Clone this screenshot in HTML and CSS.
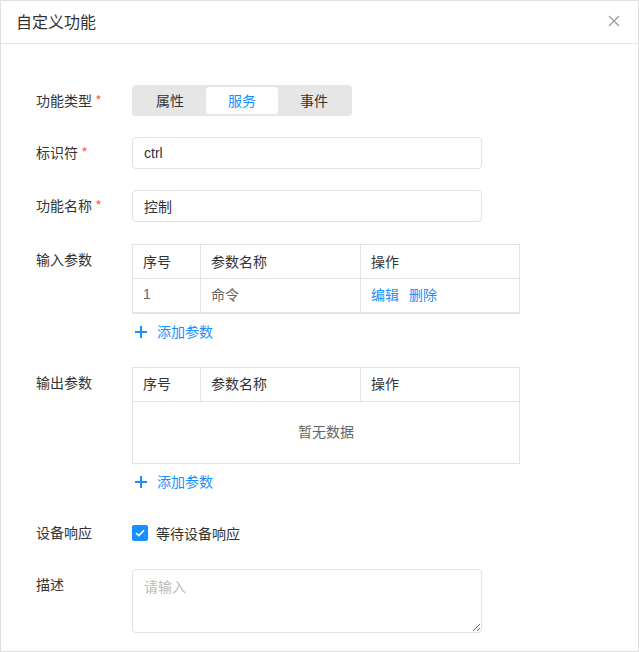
FILE: index.html
```html
<!DOCTYPE html>
<html lang="zh-CN">
<head>
    <meta charset="UTF-8">
    <title>自定义功能</title>
    <link rel="stylesheet" href="styles.css">
</head>
<body>
    <div class="dialog">
        <div class="dialog-header">
            <span class="dialog-title">自定义功能</span>
            <span class="dialog-close">
                <svg width="12" height="12" viewBox="0 0 12 12"><path d="M1 1L11 11M11 1L1 11" stroke="#999" stroke-width="1.2" fill="none"/></svg>
            </span>
        </div>
        <div class="dialog-body">
            <div class="form-item">
                <label class="form-label">功能类型 <i>*</i></label>
                <div class="segment">
                    <span class="segment-tab">属性</span>
                    <span class="segment-tab active">服务</span>
                    <span class="segment-tab">事件</span>
                </div>
            </div>

            <div class="form-item">
                <label class="form-label">标识符 <i>*</i></label>
                <input class="input latin" type="text" value="ctrl">
            </div>

            <div class="form-item form-item-wide">
                <label class="form-label">功能名称 <i>*</i></label>
                <input class="input" type="text" value="控制">
            </div>

            <div class="form-item param-item">
                <label class="form-label">输入参数</label>
                <div class="param-box">
                    <table class="param-table">
                        <colgroup><col class="col-no"><col class="col-name"><col></colgroup>
                        <thead>
                            <tr><th>序号</th><th>参数名称</th><th>操作</th></tr>
                        </thead>
                        <tbody>
                            <tr class="last-row">
                                <td class="muted latin">1</td>
                                <td class="muted">命令</td>
                                <td><a class="link">编辑</a><a class="link">删除</a></td>
                            </tr>
                        </tbody>
                    </table>
                    <div class="add-btn">
                        <svg width="12" height="12" viewBox="0 0 12 12"><path d="M6 0V12M0 6H12" stroke="#1890ff" stroke-width="2"/></svg>
                        <span>添加参数</span>
                    </div>
                </div>
            </div>

            <div class="form-item param-item">
                <label class="form-label">输出参数</label>
                <div class="param-box">
                    <table class="param-table">
                        <colgroup><col class="col-no"><col class="col-name"><col></colgroup>
                        <thead>
                            <tr><th>序号</th><th>参数名称</th><th>操作</th></tr>
                        </thead>
                        <tbody>
                            <tr><td class="empty" colspan="3">暂无数据</td></tr>
                        </tbody>
                    </table>
                    <div class="add-btn">
                        <svg width="12" height="12" viewBox="0 0 12 12"><path d="M6 0V12M0 6H12" stroke="#1890ff" stroke-width="2"/></svg>
                        <span>添加参数</span>
                    </div>
                </div>
            </div>

            <div class="form-item form-item-tight">
                <label class="form-label">设备响应</label>
                <label class="checkbox">
                    <span class="checkbox-box">
                        <svg width="10" height="8" viewBox="0 0 10 8"><path d="M1 4L3.8 6.6L9 1.2" stroke="#fff" stroke-width="1.6" fill="none"/></svg>
                    </span>
                    <span>等待设备响应</span>
                </label>
            </div>

            <div class="form-item">
                <label class="form-label">描述</label>
                <textarea class="textarea" placeholder="请输入"></textarea>
            </div>
        </div>
    </div>
</body>
</html>
```

FILE: styles.css
```css
* {
    box-sizing: border-box;
}

body {
    margin: 0;
    font-family: "Noto Sans CJK SC", "Liberation Sans", sans-serif;
    font-size: 14px;
    color: #333;
    background: #fff;
}

.latin {
    font-family: "Liberation Sans", "Noto Sans CJK SC", sans-serif;
}

.dialog {
    width: 639px;
    height: 652px;
    border: 1px solid #e0e0e0;
    background: #fff;
}

.dialog-header {
    height: 43px;
    border-bottom: 1px solid #e4e4e4;
    display: flex;
    align-items: center;
    justify-content: space-between;
    padding: 0 18px 2px 15px;
}

.dialog-title {
    font-size: 16px;
    color: #333;
}

.dialog-close {
    display: flex;
    cursor: pointer;
}

.dialog-body {
    padding: 41px 0 0 35px;
}

.form-item {
    display: flex;
    align-items: flex-start;
    margin-bottom: 21px;
}

.form-item-wide {
    margin-bottom: 22px;
}

.form-item-tight {
    margin-bottom: 20px;
}

.param-item {
    margin-bottom: 17px;
}

.form-label {
    width: 96px;
    flex-shrink: 0;
    line-height: 30px;
    color: #333;
}

.form-label i {
    font-style: normal;
    color: #f5694d;
}

.segment {
    display: flex;
    padding: 2px;
    background: #e6e6e6;
    border-radius: 4px;
}

.segment-tab {
    width: 72px;
    height: 27px;
    line-height: 26px;
    text-align: center;
    color: #333;
    border-radius: 4px;
}

.segment-tab.active {
    background: #fff;
    color: #1890ff;
}

.input,
.textarea {
    width: 350px;
    border: 1px solid #e2e2e2;
    border-radius: 4px;
    font-family: "Noto Sans CJK SC", sans-serif;
    font-size: 14px;
    color: #333;
    padding: 0 11px;
    outline: none;
}

.input.latin {
    font-family: "Liberation Sans", "Noto Sans CJK SC", sans-serif;
}

.input {
    height: 32px;
    padding-bottom: 1px;
}

.textarea {
    height: 64px;
    padding: 5px 11px;
    line-height: 22px;
    resize: vertical;
}

.textarea::placeholder {
    color: #bbb;
}

.param-box {
    width: 388px;
}

.param-table {
    width: 100%;
    border-collapse: collapse;
    table-layout: fixed;
    border: 1px solid #e4e4e4;
}

.col-no {
    width: 68px;
}

.col-name {
    width: 160px;
}

.param-table th,
.param-table td {
    border: 1px solid #e4e4e4;
    padding: 0 10px 2px;
    text-align: left;
    font-weight: normal;
    height: 34px;
}

.param-table th {
    color: #333;
}

.param-table .last-row td {
    border-bottom: 2px solid #e4e4e4;
}

.muted {
    color: #666;
}

.link {
    color: #1890ff;
    margin-right: 10px;
    cursor: pointer;
}

.param-table td.empty {
    height: 62px;
    text-align: center;
    color: #666;
}

.add-btn {
    height: 36px;
    display: flex;
    align-items: center;
    gap: 10px;
    padding-left: 3px;
    color: #1890ff;
    cursor: pointer;
}

.add-btn span {
    margin-top: -2px;
}

.checkbox {
    display: flex;
    align-items: center;
    gap: 8px;
    height: 32px;
    color: #333;
}

.checkbox-box {
    width: 16px;
    height: 16px;
    background: #1890ff;
    border-radius: 2px;
    display: flex;
    align-items: center;
    justify-content: center;
}
```
